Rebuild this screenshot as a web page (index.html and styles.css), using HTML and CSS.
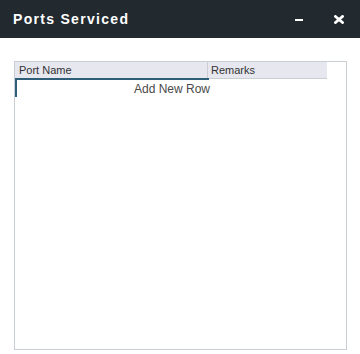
FILE: index.html
```html
<!DOCTYPE html>
<html lang="en">
	<head>
		<meta charset="UTF-8">
		<title>Ports Serviced</title>
		<link rel="stylesheet" href="styles.css">
	</head>
	<body>
		<div class="titlebar">
			<h1 class="title">Ports Serviced</h1>
			<span class="minimize"></span>
			<svg class="close" width="10" height="9" viewBox="0 0 10 9">
				<path d="M1.5 1.5 L8.5 7.5 M8.5 1.5 L1.5 7.5" stroke="white" stroke-width="2.8" stroke-linecap="square"/>
			</svg>
		</div>
		<div class="content">
			<div class="grid">
				<div class="grid-head">
					<div class="col col-name">Port Name</div>
					<div class="col col-remarks">Remarks</div>
				</div>
				<div class="add-row">
					<div class="add-cell">Add New Row</div>
				</div>
			</div>
		</div>
	</body>
</html>
```

FILE: styles.css
```css
html {
	font-family: "Liberation Sans", Arial, sans-serif;
}

body {
	margin: 0;
	background-color: white;
}

.titlebar {
	display: flex;
	align-items: center;
	height: 38px;
	padding-left: 13px;
	background-color: #22292f;
	color: white;
}

.title {
	flex: 1;
	margin: 0;
	font-size: 14px;
	font-weight: bold;
	letter-spacing: 1.3px;
}

.minimize {
	width: 8px;
	height: 2px;
	margin-top: 1px;
	margin-right: 31px;
	background-color: white;
}
.close {
	margin-right: 16px;
}

.content {
	padding: 23px 13px 4px 14px;
}

.grid {
	height: 287px;
	border: 1px solid #c9cdd4;
}

.grid-head {
	display: flex;
	width: 312px;
	height: 16px;
	background-color: #e6e7ef;
	border-bottom: 1px solid #c9cdd4;
	font-size: 11px;
	color: #333;
}
.col {
	padding: 2px 0 0 4px;
	box-sizing: border-box;
}
.col-name {
	width: 193px;
	border-right: 1px solid #c9cdd4;
}
.col-remarks {
	width: 119px;
	padding-left: 3px;
}

.add-row {
	width: 312px;
	position: relative;
}
.add-cell {
	height: 18px;
	padding-top: 3px;
	text-align: center;
	font-size: 12px;
	color: #4a4a4a;
	border-left: 2px solid #2f5f78;
	box-sizing: border-box;
}
.add-row::before {
	content: "";
	position: absolute;
	left: 0;
	top: -1px;
	width: 194px;
	height: 2px;
	background-color: #2f5f78;
}
```
